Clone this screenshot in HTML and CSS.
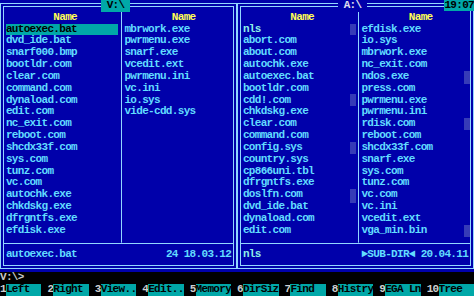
FILE: index.html
```html
<!DOCTYPE html>
<html lang="en">
<head>
    <meta charset="UTF-8">
    <meta name="viewport" content="width=device-width, initial-scale=1.0">
    <title>Volkov Commander</title>
    <link rel="stylesheet" href="styles.css">
</head>
<body>
    <div class="screen">
        <div class="panels">
            <!-- Painel esquerdo -->
            <section class="panel">
                <div class="frame">
                    <div class="cols">
                        <div class="col col-wide">
                            <div class="head">Name</div>
                            <div class="row sel">autoexec.bat</div>
                            <div class="row">dvd_ide.bat</div>
                            <div class="row">snarf000.bmp</div>
                            <div class="row">bootldr.com</div>
                            <div class="row">clear.com</div>
                            <div class="row">command.com</div>
                            <div class="row">dynaload.com</div>
                            <div class="row">edit.com</div>
                            <div class="row">nc_exit.com</div>
                            <div class="row">reboot.com</div>
                            <div class="row">shcdx33f.com</div>
                            <div class="row">sys.com</div>
                            <div class="row">tunz.com</div>
                            <div class="row">vc.com</div>
                            <div class="row">autochk.exe</div>
                            <div class="row">chkdskg.exe</div>
                            <div class="row">dfrgntfs.exe</div>
                            <div class="row">efdisk.exe</div>
                        </div>
                        <div class="divider"></div>
                        <div class="col">
                            <div class="head">Name</div>
                            <div class="row">mbrwork.exe</div>
                            <div class="row">pwrmenu.exe</div>
                            <div class="row">snarf.exe</div>
                            <div class="row">vcedit.ext</div>
                            <div class="row">pwrmenu.ini</div>
                            <div class="row">vc.ini</div>
                            <div class="row">io.sys</div>
                            <div class="row">vide-cdd.sys</div>
                        </div>
                    </div>
                    <div class="info">
                        <span>autoexec.bat</span>
                        <span>24 18.03.12</span>
                    </div>
                </div>
                <div class="title active"> V:\ </div>
            </section>

            <!-- Painel direito -->
            <section class="panel">
                <div class="frame">
                    <div class="cols">
                        <div class="col col-wide">
                            <div class="head">Name</div>
                            <div class="row dir">nls</div>
                            <div class="row">abort.com</div>
                            <div class="row">about.com</div>
                            <div class="row">autochk.exe</div>
                            <div class="row">autoexec.bat</div>
                            <div class="row">bootldr.com</div>
                            <div class="row">cdd!.com</div>
                            <div class="row">chkdskg.exe</div>
                            <div class="row">clear.com</div>
                            <div class="row">command.com</div>
                            <div class="row">config.sys</div>
                            <div class="row">country.sys</div>
                            <div class="row">cp866uni.tbl</div>
                            <div class="row">dfrgntfs.exe</div>
                            <div class="row">doslfn.com</div>
                            <div class="row">dvd_ide.bat</div>
                            <div class="row">dynaload.com</div>
                            <div class="row">edit.com</div>
                        </div>
                        <div class="divider"></div>
                        <div class="col">
                            <div class="head">Name</div>
                            <div class="row">efdisk.exe</div>
                            <div class="row">io.sys</div>
                            <div class="row">mbrwork.exe</div>
                            <div class="row">nc_exit.com</div>
                            <div class="row">ndos.exe</div>
                            <div class="row">press.com</div>
                            <div class="row">pwrmenu.exe</div>
                            <div class="row">pwrmenu.ini</div>
                            <div class="row">rdisk.com</div>
                            <div class="row">reboot.com</div>
                            <div class="row">shcdx33f.com</div>
                            <div class="row">snarf.exe</div>
                            <div class="row">sys.com</div>
                            <div class="row">tunz.com</div>
                            <div class="row">vc.com</div>
                            <div class="row">vc.ini</div>
                            <div class="row">vcedit.ext</div>
                            <div class="row">vga_min.bin</div>
                        </div>
                    </div>
                    <div class="info">
                        <span class="dir">nls</span>
                        <span>&#9658;SUB-DIR&#9668; 20.04.11</span>
                    </div>
                </div>
                <div class="title"> A:\ </div>
                <!-- marcas fantasmas da captura -->
                <div class="ghost" style="left: 113px; top: 24px; height: 11px;"></div>
                <div class="ghost" style="left: 113px; top: 94px; height: 12px;"></div>
                <div class="ghost" style="left: 113px; top: 142px; height: 12px;"></div>
                <div class="ghost" style="left: 113px; top: 189px; height: 14px;"></div>
                <div class="ghost" style="left: 227px; top: 71px; height: 13px;"></div>
                <div class="ghost" style="left: 227px; top: 118px; height: 12px;"></div>
                <div class="ghost" style="left: 227px; top: 225px; height: 12px;"></div>
            </section>
        </div>

        <div class="cmd">V:\&gt;</div>

        <div class="keybar">
            <div class="key"><span class="num">1</span><span class="lbl">Left</span></div>
            <div class="key"><span class="num">2</span><span class="lbl">Right</span></div>
            <div class="key"><span class="num">3</span><span class="lbl">View..</span></div>
            <div class="key"><span class="num">4</span><span class="lbl">Edit..</span></div>
            <div class="key"><span class="num">5</span><span class="lbl">Memory</span></div>
            <div class="key"><span class="num">6</span><span class="lbl">DirSiz</span></div>
            <div class="key"><span class="num">7</span><span class="lbl">Find</span></div>
            <div class="key"><span class="num">8</span><span class="lbl">Histry</span></div>
            <div class="key"><span class="num">9</span><span class="lbl">EGA Ln</span></div>
            <div class="key"><span class="num">10</span><span class="lbl">Tree</span></div>
        </div>

        <div class="clock">19:07</div>
    </div>
</body>
</html>
```

FILE: styles.css
```css
:root {
    --cw: 5.925px;   /* largura de uma célula */
    --rh: 11.84px;   /* altura de uma linha */
    --blue: #0000aa;
    --cyan: #00a8a8;
    --text: #62dcff;
    --line: #92d6ff;
}
* {
    box-sizing: border-box;
}
body {
    margin: 0;
    background-color: #000;
}
.screen {
    position: relative;
    width: 474px;
    height: 296px;
    overflow: hidden;
    background-color: #000;
    font-family: 'Liberation Mono', 'DejaVu Sans Mono', monospace;
    font-size: 11px;
    font-weight: bold;
    letter-spacing: -0.675px;
    line-height: var(--rh);
    color: var(--text);
}
.row, .head, .title, .info span, .cmd, .num, .lbl, .clock {
    white-space: pre;
}
.panels {
    display: flex;
}
.panel {
    position: relative;
    width: 237px;
    height: calc(var(--rh) * 23);
    padding: 3.42px 0.46px;
    background-color: var(--blue);
}
.frame {
    height: 100%;
    border: 4px double var(--line);
    padding: 0 1.465px 4.42px;
}
.cols {
    display: flex;
    height: calc(4.42px + var(--rh) * 19.5 + 1px);
    margin: 0 -1.465px;
    padding: 4.42px 1.465px 0;
    border-bottom: 1px solid var(--line);
}
.col {
    width: calc(var(--cw) * 18);
}
.col-wide {
    width: calc(var(--cw) * 19);
}
.divider {
    width: var(--cw);
    margin-top: -4.42px;
    background: linear-gradient(var(--line), var(--line)) center / 1.2px 100% no-repeat;
}
.head {
    height: var(--rh);
    padding-left: calc(var(--cw) * 8);
    color: #ffff55;
}
.row {
    height: var(--rh);
}
.sel {
    background-color: var(--cyan);
    color: #000;
}
.dir {
    color: #8ef0e8;
}
.info {
    display: flex;
    justify-content: space-between;
    height: var(--rh);
    margin-top: calc(var(--rh) * 0.5 - 1px);
}
.title {
    position: absolute;
    top: 0;
    left: calc(var(--cw) * 17);
    height: var(--rh);
    background-color: var(--blue);
    color: #e0e0f0;
}
.title.active {
    background-color: var(--cyan);
    color: #000;
}
.ghost {
    position: absolute;
    width: 6px;
    background-color: rgba(120, 130, 200, 0.45);
}
.cmd {
    height: var(--rh);
    color: #c8c8c8;
}
.keybar {
    display: flex;
    height: var(--rh);
}
.key {
    display: flex;
    margin-right: var(--cw);
}
.key:last-child {
    margin-right: 0;
}
.num {
    color: #d0d0d0;
}
.lbl {
    width: calc(var(--cw) * 6);
    background-color: var(--cyan);
    color: #000;
}
.clock {
    position: absolute;
    top: 0;
    right: 0;
    width: calc(var(--cw) * 5);
    height: calc(var(--rh) - 1px);
    background-color: var(--cyan);
    color: #000;
}
```
